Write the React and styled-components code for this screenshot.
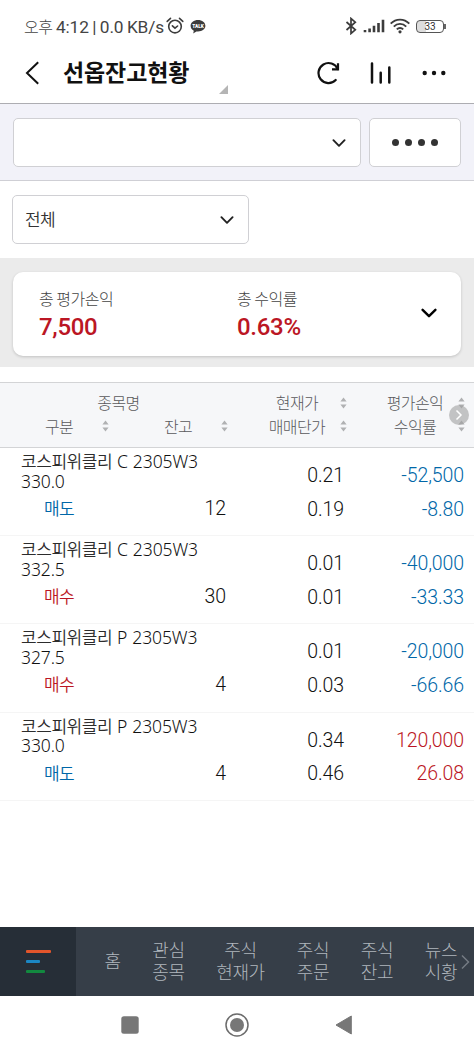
import styled, { createGlobalStyle } from "styled-components";

const KR = `"Noto Sans CJK KR", sans-serif`;
const NUM = `Roboto, "Noto Sans CJK KR", sans-serif`;

const RED = "#bb1624";
const BLUE = "#0067a8";

const GlobalStyle = createGlobalStyle`
  * {
    box-sizing: border-box;
  }
  body {
    margin: 0;
    background: #fff;
    font-family: ${KR};
  }
`;

const positions = [
  {
    code: "C 2305W3",
    strike: "330.0",
    side: "매도",
    qty: "12",
    price: "0.21",
    avg: "0.19",
    profit: "-52,500",
    rate: "-8.80",
  },
  {
    code: "C 2305W3",
    strike: "332.5",
    side: "매수",
    qty: "30",
    price: "0.01",
    avg: "0.01",
    profit: "-40,000",
    rate: "-33.33",
  },
  {
    code: "P 2305W3",
    strike: "327.5",
    side: "매수",
    qty: "4",
    price: "0.01",
    avg: "0.03",
    profit: "-20,000",
    rate: "-66.66",
  },
  {
    code: "P 2305W3",
    strike: "330.0",
    side: "매도",
    qty: "4",
    price: "0.34",
    avg: "0.46",
    profit: "120,000",
    rate: "26.08",
  },
];

const tabs = [
  { lines: ["홈"], width: 73 },
  { lines: ["관심", "종목"], width: 39 },
  { lines: ["주식", "현재가"], width: 105 },
  { lines: ["주식", "주문"], width: 40 },
  { lines: ["주식", "잔고"], width: 88 },
  { lines: ["뉴스", "시황"], width: 40 },
];

const Chevron = ({ color = "#222", size = 14, weight = 1.9 }) => (
  <svg width={size} height={size} viewBox="0 0 14 14">
    <path
      d="M1.4 4.2 7 9.8l5.6-5.6"
      fill="none"
      stroke={color}
      strokeWidth={weight}
      strokeLinecap="round"
      strokeLinejoin="round"
    />
  </svg>
);

const Sorter = () => (
  <SortIcon width="7" height="12" viewBox="0 0 7 12">
    <path d="M3.5 0.6 6.6 4.6H0.4zM3.5 11.4 6.6 7.4H0.4z" fill="#b0b1b3" />
  </SortIcon>
);

const StatusBar = () => (
  <StatusRow>
    <Clock>
      <ClockHangul>오후</ClockHangul> 4:12 | 0.0 KB/s
    </Clock>
    <AlarmIcon width="18" height="18" viewBox="0 0 18 18">
      <g fill="none" stroke="#3c3c3c" strokeWidth="1.6" strokeLinecap="round">
        <circle cx="9" cy="9.6" r="6.3" />
        <path d="M1.2 4.4 4.5 1.4M16.8 4.4 13.5 1.4" />
        <path d="M6.4 8.8 9 11.2l2.6-2.2" />
      </g>
    </AlarmIcon>
    <Talk width="16" height="15" viewBox="0 0 16 15">
      <path
        d="M8 1C3.8 1 .6 3.5.6 6.8c0 2.1 1.3 3.9 3.2 5l-.6 2.6 3.2-2c.5.1 1 .1 1.6.1 4.2 0 7.4-2.5 7.4-5.7S12.2 1 8 1z"
        fill="#3c3c3c"
      />
      <text
        x="8"
        y="8.7"
        fill="#fff"
        fontFamily="Roboto, sans-serif"
        fontSize="4.8"
        fontWeight="900"
        textAnchor="middle"
      >
        TALK
      </text>
    </Talk>
    <Spacer />
    <svg width="12" height="18" viewBox="0 0 12 18">
      <path
        d="M1.5 5 10.3 12.8 6 16.5V1.5l4.3 3.7L1.5 13"
        fill="none"
        stroke="#3c3c3c"
        strokeWidth="1.7"
      />
    </svg>
    <Signal width="22" height="14" viewBox="0 0 22 14">
      <path
        d="M2 13.3v-2.2M6.6 13.3V9.4M11 13.3V6.8M15.500 13.3V4M20 13.3V.8"
        stroke="#3c3c3c"
        strokeWidth="2.6"
      />
    </Signal>
    <Wifi width="20" height="16" viewBox="0 0 20 16">
      <g fill="none" stroke="#3c3c3c" strokeWidth="1.9">
        <path d="M.7 5.7C5.9.2 14.1.2 19.3 5.7" />
        <path d="M3.8 8.6c3.5-3.6 8.9-3.6 12.4 0" />
        <path d="M6.8 11.4c1.8-1.9 4.6-1.9 6.4 0" />
      </g>
      <circle cx="10" cy="13.8" r="1.6" fill="#3c3c3c" />
    </Wifi>
    <Battery>33</Battery>
    <BatteryTip />
  </StatusRow>
);

const TitleBar = () => (
  <TitleRow>
    <svg width="15" height="24" viewBox="0 0 15 24">
      <path
        d="M13.2 1.3 2 12l11.2 10.7"
        fill="none"
        stroke="#111"
        strokeWidth="2"
      />
    </svg>
    <Title>선옵잔고현황</Title>
    <Corner width="9" height="9" viewBox="0 0 9 9">
      <path d="M9 0v9H0z" fill="#b5b5b5" />
    </Corner>
    <Spacer />
    <Reload width="24" height="24" viewBox="0 0 24 24">
      <g fill="none" stroke="#111" strokeWidth="2.2">
        <path d="M18.700 19a10 10 0 1 1 2-10.900" strokeLinecap="round" />
        <path d="M21 2.200v6.200h-6" />
      </g>
    </Reload>
    <Bars width="22" height="22" viewBox="0 0 22 22">
      <path
        d="M2 1.5v19M10.700 10.800v9.700M19.300 5.500v15"
        stroke="#111"
        strokeWidth="2.5"
        strokeLinecap="round"
      />
    </Bars>
    <svg width="24" height="6" viewBox="0 0 24 6">
      <g fill="#111">
        <circle cx="2.7" cy="3" r="2.2" />
        <circle cx="12" cy="3" r="2.2" />
        <circle cx="21.3" cy="3" r="2.2" />
      </g>
    </svg>
  </TitleRow>
);

const Position = ({ item }) => {
  const profitColor = item.profit.startsWith("-") ? BLUE : RED;
  return (
    <Row>
      <NameCell>
        <Name>
          <Hangul>코스피위클리</Hangul> {item.code}
        </Name>
        <Name>{item.strike}</Name>
        <SideLine>
          <Side $color={item.side === "매도" ? BLUE : RED}>{item.side}</Side>
          <Value>{item.qty}</Value>
        </SideLine>
      </NameCell>
      <ValueCell>
        <Value>{item.price}</Value>
        <Value>{item.avg}</Value>
      </ValueCell>
      <ValueCell>
        <Value $color={profitColor}>{item.profit}</Value>
        <Value $color={profitColor}>{item.rate}</Value>
      </ValueCell>
    </Row>
  );
};

const App = () => {
  return (
    <Screen>
      <GlobalStyle />
      <StatusBar />
      <TitleBar />
      <AccountPanel>
        <Select $width={348}>
          <span />
          <Chevron />
        </Select>
        <Password>
          <Dot />
          <Dot />
          <Dot />
          <Dot />
        </Password>
      </AccountPanel>
      <FilterPanel>
        <Select $width={237}>
          <SelectText>전체</SelectText>
          <Chevron />
        </Select>
      </FilterPanel>
      <SummaryPanel>
        <SummaryCard>
          <SummaryItem>
            <SummaryLabel>총 평가손익</SummaryLabel>
            <SummaryValue>7,500</SummaryValue>
          </SummaryItem>
          <SummaryItem>
            <SummaryLabel>총 수익률</SummaryLabel>
            <SummaryValue>0.63%</SummaryValue>
          </SummaryItem>
          <Chevron color="#000" size={16} weight={2.1} />
        </SummaryCard>
      </SummaryPanel>
      <TableHead>
        <NameHead>
          <NameLabel>종목명</NameLabel>
          <SubHeads>
            <PairHead>
              <HeadLabel>구분</HeadLabel>
              <Sorter />
            </PairHead>
            <PairHead>
              <HeadLabel>잔고</HeadLabel>
              <Sorter />
            </PairHead>
          </SubHeads>
        </NameHead>
        <PairHead>
          <HeadLabel>현재가</HeadLabel>
          <Sorter />
          <HeadLabel>매매단가</HeadLabel>
          <Sorter />
        </PairHead>
        <PairHead>
          <HeadLabel>평가손익</HeadLabel>
          <Sorter />
          <HeadLabel>수익률</HeadLabel>
          <Sorter />
        </PairHead>
        <NextBadge>
          <svg width="8" height="12" viewBox="0 0 8 12">
            <path
              d="M1.5 1.5 6 6l-4.5 4.5"
              fill="none"
              stroke="#fff"
              strokeWidth="1.5"
            />
          </svg>
        </NextBadge>
      </TableHead>
      <Rows>
        {positions.map((item, index) => (
          <Position key={index} item={item} />
        ))}
      </Rows>
      <TabBar>
        <MenuButton>
          <MenuLine $width={25} $color="#e2552b" />
          <MenuLine $width={14} $color="#1b87c4" />
          <MenuLine $width={19} $color="#12893f" />
        </MenuButton>
        {tabs.map((tab, index) => (
          <Tab key={index} $width={tab.width}>
            {tab.lines.map((line) => (
              <TabLine key={line}>{line}</TabLine>
            ))}
          </Tab>
        ))}
        <MoreTabs width="9" height="16" viewBox="0 0 9 16">
          <path
            d="M1 1.5 7.5 8 1 14.5"
            fill="none"
            stroke="#747b83"
            strokeWidth="1.5"
          />
        </MoreTabs>
      </TabBar>
      <SystemNav>
        <svg width="18" height="18" viewBox="0 0 18 18">
          <rect x="0.3" y="0.3" width="17.4" height="17.4" rx="2.5" fill="#777" />
        </svg>
        <svg width="24" height="24" viewBox="0 0 24 24">
          <circle cx="12" cy="12" r="11" fill="none" stroke="#6c6c6c" strokeWidth="1.5" />
          <circle cx="12" cy="12" r="7" fill="#777" />
        </svg>
        <svg width="18" height="20" viewBox="0 0 18 20">
          <path d="M1 10 16.3 1v18z" fill="#777" stroke="#777" strokeLinejoin="round" />
        </svg>
      </SystemNav>
    </Screen>
  );
};

const Screen = styled.div`
  width: 474px;
  height: 1053px;
  display: flex;
  flex-direction: column;
  overflow: hidden;
  background: #fff;
`;

const Spacer = styled.div`
  flex: 1;
`;

const StatusRow = styled.div`
  height: 52px;
  flex: none;
  display: flex;
  align-items: center;
  padding: 0 28px 0 24px;
`;

const Clock = styled.div`
  width: 139px;
  font-family: ${NUM};
  font-size: 17.3px;
  letter-spacing: -0.15px;
  word-spacing: -0.6px;
  line-height: 24px;
  white-space: nowrap;
  color: #444;
`;

const ClockHangul = styled.span`
  font-family: ${KR};
  font-size: 16px;
  font-weight: 300;
  letter-spacing: -0.5px;
`;

const AlarmIcon = styled.svg`
  margin-left: 3px;
`;

const Talk = styled.svg`
  margin-left: 6px;
`;

const Signal = styled.svg`
  margin-left: 6px;
`;

const Wifi = styled.svg`
  margin-left: 5px;
`;

const Battery = styled.div`
  width: 28px;
  height: 13px;
  margin-left: 6px;
  border: 1px solid #555;
  border-radius: 4px;
  background: linear-gradient(90deg, #ddd 33%, #fff 33%);
  font-family: ${NUM};
  font-size: 10px;
  line-height: 12px;
  text-align: center;
  color: #333;
`;

const BatteryTip = styled.div`
  width: 2px;
  height: 5px;
  background: #666;
`;

const TitleRow = styled.div`
  height: 52px;
  flex: none;
  display: flex;
  align-items: center;
  padding: 0 28px 10px 25px;
  border-bottom: 1px solid #adadb2;
`;

const Title = styled.h1`
  width: 128px;
  margin: -4px 0 0 23px;
  font-size: 23px;
  font-weight: 700;
  line-height: 32px;
  letter-spacing: -0.1px;
  white-space: nowrap;
  color: #111;
`;

const Corner = styled.svg`
  align-self: flex-end;
  margin: 0 0 -1px 28px;
`;

const Reload = styled.svg`
  margin-right: 29px;
`;

const Bars = styled.svg`
  margin-right: 30px;
`;

const AccountPanel = styled.div`
  height: 77px;
  flex: none;
  display: flex;
  align-items: flex-start;
  gap: 8px;
  padding: 14px 13px 0;
  background: #f2f2f9;
  border-bottom: 1px solid #cfcfd5;
`;

const Field = styled.div`
  height: 49px;
  display: flex;
  align-items: center;
  background: #fff;
  border: 1px solid #d0d0d4;
  border-radius: 5px;
`;

const Select = styled(Field)`
  width: ${(props) => props.$width}px;
  justify-content: space-between;
  padding: 0 14px 0 12px;
`;

const SelectText = styled.span`
  margin-top: -3px;
  font-size: 17px;
  font-weight: 350;
  letter-spacing: -0.6px;
  color: #333;
`;

const Password = styled(Field)`
  width: 92px;
  justify-content: center;
  gap: 6px;
`;

const Dot = styled.i`
  width: 7px;
  height: 7px;
  border-radius: 50%;
  background: #333;
`;

const FilterPanel = styled.div`
  height: 77px;
  flex: none;
  padding: 14px 12px;
`;

const SummaryPanel = styled.div`
  height: 109px;
  flex: none;
  padding: 14px 13px;
  margin-bottom: 15px;
  background: #ebebeb;
`;

const SummaryCard = styled.div`
  height: 84px;
  display: grid;
  grid-template-columns: 198px 1fr 16px;
  align-items: center;
  padding: 0 24px 0 26px;
  background: #fff;
  border-radius: 10px;
  box-shadow: 0 1px 3px rgba(0, 0, 0, 0.18);

  > svg {
    margin-top: -2px;
  }
`;

const SummaryItem = styled.div`
  padding-top: 2px;
`;

const SummaryLabel = styled.div`
  font-size: 16px;
  font-weight: 300;
  line-height: 23px;
  letter-spacing: -0.5px;
  color: #444;
`;

const SummaryValue = styled.div`
  font-family: ${NUM};
  font-size: 24px;
  font-weight: 500;
  line-height: 34px;
  letter-spacing: -0.3px;
  color: ${RED};
`;

const TableHead = styled.div`
  position: relative;
  height: 66px;
  flex: none;
  display: grid;
  grid-template-columns: 237px 119px 118px;
  padding-top: 8px;
  background: #f6f7f9;
  border-top: 1px solid #d3d4d6;
  border-bottom: 1px solid #d3d4d6;
`;

const NameHead = styled.div`
  display: flex;
  flex-direction: column;
`;

const SubHeads = styled.div`
  display: flex;
  justify-content: space-between;
  padding-left: 30px;
`;

const HeadLabel = styled.span`
  font-size: 16px;
  font-weight: 300;
  line-height: 23.5px;
  letter-spacing: -0.6px;
  text-align: center;
  white-space: nowrap;
  color: #59595c;
`;

const NameLabel = styled(HeadLabel)`
  height: 23.5px;
`;

const PairHead = styled.div`
  display: grid;
  grid-template-columns: 58px 7px;
  grid-auto-rows: 23.5px;
  justify-content: end;
  align-content: start;
  column-gap: 14px;
  align-items: center;
  padding-right: 9px;
`;

const SortIcon = styled.svg`
  display: block;
`;

const NextBadge = styled.div`
  position: absolute;
  top: 22px;
  right: 5px;
  width: 20px;
  height: 20px;
  display: flex;
  align-items: center;
  justify-content: center;
  border-radius: 50%;
  background: rgba(160, 160, 160, 0.6);
`;

const Rows = styled.div`
  flex: 1;
`;

const Row = styled.div`
  height: 88.2px;
  display: grid;
  grid-template-columns: 205px 118px 120px;
  padding: 4px 11px 0 21px;
  border-bottom: 1px solid #f5f5f5;
`;

const NameCell = styled.div`
  display: flex;
  flex-direction: column;
`;

const Name = styled.div`
  height: 19.5px;
  font-family: "Noto Sans", "Noto Sans CJK KR", sans-serif;
  font-size: 17.5px;
  font-weight: 300;
  line-height: 19.5px;
  letter-spacing: -0.1px;
  word-spacing: 0.5px;
  white-space: nowrap;
  color: #111;
`;

const Hangul = styled.span`
  font-family: ${KR};
  font-size: 17px;
  font-weight: 350;
  line-height: 1;
  letter-spacing: -0.45px;
  color: #2c2c2c;
`;

const SideLine = styled.div`
  display: flex;
  justify-content: space-between;
  padding: 1px 0 0 23px;
`;

const Side = styled.span`
  margin-top: -1px;
  font-size: 17px;
  font-weight: 350;
  line-height: 33px;
  letter-spacing: -0.6px;
  color: ${(props) => props.$color};
`;

const ValueCell = styled.div`
  display: flex;
  flex-direction: column;
  padding-top: 7px;
`;

const Value = styled.span`
  font-family: ${NUM};
  font-size: 19.5px;
  font-weight: 300;
  line-height: 33.5px;
  letter-spacing: -0.1px;
  text-align: right;
  color: ${(props) => props.$color || "#111"};
`;

const TabBar = styled.div`
  position: relative;
  height: 69px;
  flex: none;
  display: flex;
  align-items: center;
  background: #363e48;
`;

const MenuButton = styled.div`
  width: 76px;
  height: 100%;
  display: flex;
  flex-direction: column;
  justify-content: center;
  gap: 7px;
  padding-left: 26px;
  background: #262e37;
`;

const MenuLine = styled.i`
  width: ${(props) => props.$width}px;
  height: 3px;
  border-radius: 1px;
  background: ${(props) => props.$color};
`;

const Tab = styled.div`
  width: ${(props) => props.$width}px;
  margin-top: -4px;
  font-size: 18px;
  font-weight: 300;
  line-height: 22px;
  letter-spacing: -0.4px;
  text-align: center;
  white-space: nowrap;
  color: #b0b6bd;
`;

const TabLine = styled.div`
  height: 22px;
`;

const MoreTabs = styled.svg`
  position: absolute;
  right: 4px;
  top: 27px;
`;

const SystemNav = styled.div`
  height: 57px;
  flex: none;
  display: flex;
  align-items: center;
  justify-content: space-between;
  padding: 0 121px;
`;

export default App;
